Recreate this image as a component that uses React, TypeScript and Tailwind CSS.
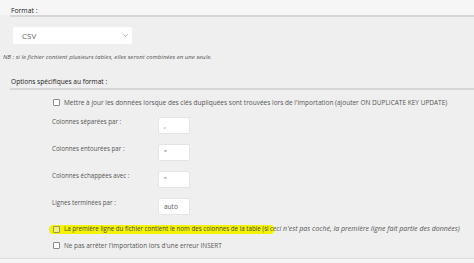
import { ChevronDown } from "lucide-react";

function Box({ tint }: { tint?: boolean }) {
  return (
    <span
      className={
        tint
          ? "inline-block w-[7px] h-[7px] bg-[#f0f080] border border-[#9a9a50] rounded-[1px] shrink-0"
          : "inline-block w-[7px] h-[7px] bg-white border border-[#8a8a8a] rounded-[1px] shrink-0"
      }
    />
  );
}

function Field({ label, value }: { label: string; value: string }) {
  return (
    <div className="flex items-start h-[27px]">
      <span className="w-[106px] text-[6.2px] leading-[9px] text-[#555]">{label}</span>
      <div className="w-[32px] h-[17px] bg-white rounded-[2px] border border-[#e4e4e4] flex items-center px-[5px] text-[6.5px] text-[#555]">
        {value}
      </div>
    </div>
  );
}

export default function App() {
  return (
    <div className="w-[474px] h-[263px] bg-[#efefef] overflow-hidden font-['Open_Sans','Noto_Sans',sans-serif]">
      <div className="h-[15px] bg-[#f6f6f6] pl-[11px] pt-[6px] text-[6.8px] text-[#222] leading-[9px]">Format :</div>
      <div className="ml-[10px] h-[2px] bg-[#d6d6d6]" />

      <div className="pl-[13px] pt-[10px]">
        <div className="w-[119px] h-[17px] bg-white rounded-[2px] flex items-center justify-between pl-[9px] pr-[3px] text-[8px] text-[#666]">
          <span>CSV</span>
          <ChevronDown size={7} strokeWidth={2.5} className="text-[#888]" />
        </div>
      </div>
      <div className="pl-[3px] pt-[8px] h-[18px] text-[6.1px] italic text-[#555] leading-[10px]">
        NB : si le fichier contient plusieurs tables, elles seront combinées en une seule.
      </div>

      <div className="pl-[11px] pt-[15px] text-[6.6px] text-[#222] leading-[10px]">Options spécifiques au format :</div>
      <div className="ml-[10px] mt-[1px] h-[2px] bg-[#d6d6d6]" />

      <div className="pl-[53px] pt-[8px]">
        <div className="flex items-center gap-[4px] h-[9px] text-[6.5px] text-[#555]">
          <Box />
          <span>
            Mettre à jour les données lorsque des clés dupliquées sont trouvées lors de l'importation (ajouter ON DUPLICATE KEY
            UPDATE)
          </span>
        </div>

        <div className="pt-[10px] -ml-[1px]">
          <Field label="Colonnes séparées par :" value="," />
          <Field label="Colonnes entourées par :" value={'"'} />
          <Field label="Colonnes échappées avec :" value={'"'} />
          <Field label="Lignes terminées par :" value="auto" />
        </div>

        <div className="flex items-center h-[10px] -mt-[1px]">
          <span className="flex items-center gap-[4px] -ml-[4px] pl-[4px] pr-[5px] h-[9px] bg-[#f4f400] rounded-[4px] text-[6.2px] text-[#444]">
            <Box tint />
            <span>La première ligne du fichier contient le nom des colonnes de la table (si</span>
          </span>
          <span className="italic text-[7px] text-[#555] -ml-[4px] whitespace-nowrap">
            ceci n'est pas coché, la première ligne fait partie des données)
          </span>
        </div>

        <div className="flex items-center gap-[4px] h-[9px] mt-[7px] text-[6.4px] text-[#555]">
          <Box />
          <span>Ne pas arrêter l'importation lors d'une erreur INSERT</span>
        </div>
      </div>

      <div className="mt-[8px] h-[1px] bg-[#dcdcdc]" />
      <div className="h-[10px] bg-[#f6f6f6]" />
    </div>
  );
}
